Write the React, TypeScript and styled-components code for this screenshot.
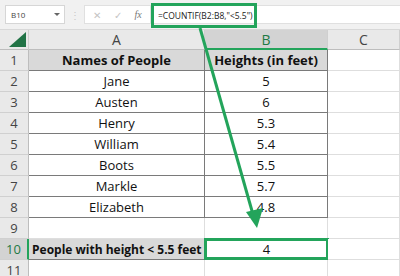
import React from 'react'
import styled, { createGlobalStyle } from 'styled-components'

const GlobalStyle = createGlobalStyle`
  html, body {
    margin: 0;
    padding: 0;
    background: #ffffff;
  }
  body {
    width: 400px;
    height: 276px;
    overflow: hidden;
    font-family: "Open Sans", "Noto Sans", sans-serif;
  }
`

const GREEN = '#23a45b'
const DARK = '#7a7a7a'
const LIGHT = '#dedede'

const Page = styled.div`
  position: relative;
  width: 400px;
  height: 276px;
  overflow: hidden;
`

const FormulaBar = styled.div`
  height: 30px;
  background: #f1f1f1;
  display: flex;
  align-items: center;
  padding-left: 5px;
  box-sizing: border-box;
  border-bottom: 1px solid #d8d8d8;
`

const NameBox = styled.div`
  width: 60px;
  height: 19px;
  background: #fff;
  border: 1px solid #d6d6d6;
  box-sizing: border-box;
  display: flex;
  align-items: center;
  justify-content: space-between;
  padding: 0 4px 0 5px;
  font-size: 8px;
  color: #444;
`

const Caret = styled.span`
  width: 0;
  height: 0;
  border-left: 3px solid transparent;
  border-right: 3px solid transparent;
  border-top: 3px solid #666;
`

const Dots = styled.div`
  width: 19px;
  text-align: center;
  color: #c8c8c8;
  font-size: 10px;
`

const FuncButtons = styled.div`
  width: 66px;
  height: 19px;
  background: #fff;
  border: 1px solid #e0e0e0;
  border-right: none;
  box-sizing: border-box;
  display: flex;
  align-items: center;
  justify-content: space-around;
  padding: 0 2px;
  color: #c4c4c4;
  font-size: 10px;
`

const Fx = styled.span`
  font-family: "Liberation Serif", serif;
  font-style: italic;
  font-size: 10px;
  color: #777;
`

const FormulaInput = styled.div`
  flex: 1;
  height: 19px;
  background: #fff;
  border: 1px solid #e0e0e0;
  border-right: none;
  box-sizing: border-box;
  display: flex;
  align-items: center;
  position: relative;
`

const FormulaHighlight = styled.div`
  position: absolute;
  left: 0;
  top: -3px;
  width: 106px;
  height: 25px;
  border: 3px solid ${GREEN};
  box-sizing: border-box;
  display: flex;
  align-items: center;
  padding-left: 4px;
  font-size: 8.5px;
  color: #222;
  white-space: nowrap;
`

const Sheet = styled.div`
  display: grid;
  grid-template-columns: 29px 176px 123px 1fr;
  grid-template-rows: 20px repeat(11, 21px);
`

const Corner = styled.div`
  background: #e9e9e9;
  border-right: 1px solid #cfcfcf;
  border-bottom: 1px solid #bdbdbd;
  box-sizing: border-box;
  display: flex;
  align-items: flex-end;
  justify-content: flex-end;
  padding: 0 2px 2px 0;
`

const ColHead = styled.div<{ $active?: boolean }>`
  background: ${(p) => (p.$active ? '#d3d3d3' : '#e9e9e9')};
  color: ${(p) => (p.$active ? '#1f7a45' : '#444')};
  border-right: 1px solid #cfcfcf;
  border-bottom: ${(p) => (p.$active ? `2px solid ${GREEN}` : '1px solid #bdbdbd')};
  box-sizing: border-box;
  display: flex;
  align-items: center;
  justify-content: center;
  font-size: 14px;
`

const RowHead = styled.div<{ $active?: boolean }>`
  background: ${(p) => (p.$active ? '#d3d3d3' : '#e9e9e9')};
  color: ${(p) => (p.$active ? '#1f7a45' : '#444')};
  border-right: ${(p) => (p.$active ? `2px solid ${GREEN}` : '1px solid #bdbdbd')};
  border-bottom: 1px solid #d0d0d0;
  box-sizing: border-box;
  display: flex;
  align-items: center;
  justify-content: center;
  font-size: 13px;
`

const Cell = styled.div<{ $table?: boolean; $head?: boolean; $left?: boolean }>`
  background: ${(p) => (p.$head ? '#d9d9d9' : '#fff')};
  border-right: 1px solid ${(p) => (p.$table ? DARK : LIGHT)};
  border-bottom: 1px solid ${(p) => (p.$table ? DARK : LIGHT)};
  box-sizing: border-box;
  display: flex;
  align-items: center;
  justify-content: ${(p) => (p.$left ? 'flex-start' : 'center')};
  padding-left: ${(p) => (p.$left ? '3px' : '0')};
  font-size: ${(p) => (p.$left ? '12px' : '13px')};
  font-weight: ${(p) => (p.$head ? 700 : 400)};
  color: #111;
  white-space: nowrap;
  overflow: hidden;
`

const SelectedCell = styled.div`
  background: #fff;
  border: 3px solid ${GREEN};
  box-sizing: border-box;
  margin: -1px -1px 0 -1px;
  display: flex;
  align-items: center;
  justify-content: center;
  font-size: 13px;
  color: #111;
`

const Arrow = styled.svg`
  position: absolute;
  left: 0;
  top: 0;
  pointer-events: none;
`

const people: [string, string][] = [
  ['Jane', '5'],
  ['Austen', '6'],
  ['Henry', '5.3'],
  ['William', '5.4'],
  ['Boots', '5.5'],
  ['Markle', '5.7'],
  ['Elizabeth', '4.8'],
]

export default function App() {
  return (
    <Page>
      <GlobalStyle />
      <FormulaBar>
        <NameBox>
          B10
          <Caret />
        </NameBox>
        <Dots>⋮</Dots>
        <FuncButtons>
          <span>✕</span>
          <span>✓</span>
          <Fx>fx</Fx>
        </FuncButtons>
        <FormulaInput>
          <FormulaHighlight>=COUNTIF(B2:B8,"&lt;5.5")</FormulaHighlight>
        </FormulaInput>
      </FormulaBar>
      <Sheet>
        <Corner>
          <svg width="17" height="15" viewBox="0 0 17 15">
            <polygon points="17,0 17,15 0,15" fill="#217346" />
          </svg>
        </Corner>
        <ColHead>A</ColHead>
        <ColHead $active>B</ColHead>
        <ColHead>C</ColHead>

        <RowHead>1</RowHead>
        <Cell $table $head>Names of People</Cell>
        <Cell $table $head>Heights (in feet)</Cell>
        <Cell />

        {people.map(([name, h], i) => (
          <React.Fragment key={name}>
            <RowHead>{i + 2}</RowHead>
            <Cell $table>{name}</Cell>
            <Cell $table>{h}</Cell>
            <Cell />
          </React.Fragment>
        ))}

        <RowHead>9</RowHead>
        <Cell />
        <Cell />
        <Cell />

        <RowHead $active>10</RowHead>
        <Cell $table $head $left>People with height &lt; 5.5 feet</Cell>
        <SelectedCell>4</SelectedCell>
        <Cell />

        <RowHead>11</RowHead>
        <Cell />
        <Cell />
        <Cell />
      </Sheet>
      <Arrow width="400" height="276" viewBox="0 0 400 276">
        <line x1="200" y1="28" x2="254" y2="218" stroke={GREEN} strokeWidth="3" />
        <polygon points="246,212 263,208 257,228" fill={GREEN} />
      </Arrow>
    </Page>
  )
}
